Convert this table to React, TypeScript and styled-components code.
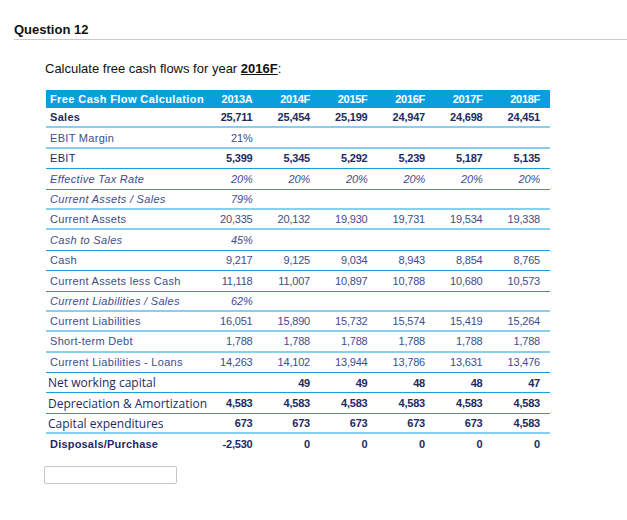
import React from 'react';
import styled, { createGlobalStyle } from 'styled-components';

type Kind = 'bold' | 'semi' | 'plain' | 'italic' | 'calibri' | 'spaced';

interface RowData {
  label: string;
  values: string[];
  kind: Kind;
  line?: 'light' | 'dark' | 'none';
}

const rows: RowData[] = [
  { label: 'Sales', values: ['25,711', '25,454', '25,199', '24,947', '24,698', '24,451'], kind: 'bold', line: 'light' },
  { label: 'EBIT Margin', values: ['21%', '', '', '', '', ''], kind: 'plain', line: 'light' },
  { label: 'EBIT', values: ['5,399', '5,345', '5,292', '5,239', '5,187', '5,135'], kind: 'semi', line: 'dark' },
  { label: 'Effective Tax Rate', values: ['20%', '20%', '20%', '20%', '20%', '20%'], kind: 'italic', line: 'dark' },
  { label: 'Current Assets / Sales', values: ['79%', '', '', '', '', ''], kind: 'italic', line: 'light' },
  { label: 'Current Assets', values: ['20,335', '20,132', '19,930', '19,731', '19,534', '19,338'], kind: 'plain', line: 'light' },
  { label: 'Cash to Sales', values: ['45%', '', '', '', '', ''], kind: 'italic', line: 'dark' },
  { label: 'Cash', values: ['9,217', '9,125', '9,034', '8,943', '8,854', '8,765'], kind: 'plain', line: 'dark' },
  { label: 'Current Assets less Cash', values: ['11,118', '11,007', '10,897', '10,788', '10,680', '10,573'], kind: 'plain', line: 'dark' },
  { label: 'Current Liabilities / Sales', values: ['62%', '', '', '', '', ''], kind: 'italic', line: 'light' },
  { label: 'Current Liabilities', values: ['16,051', '15,890', '15,732', '15,574', '15,419', '15,264'], kind: 'plain', line: 'light' },
  { label: 'Short-term Debt', values: ['1,788', '1,788', '1,788', '1,788', '1,788', '1,788'], kind: 'plain', line: 'light' },
  { label: 'Current Liabilities - Loans', values: ['14,263', '14,102', '13,944', '13,786', '13,631', '13,476'], kind: 'plain', line: 'dark' },
  { label: 'Net working capital', values: ['', '49', '49', '48', '48', '47'], kind: 'calibri', line: 'dark' },
  { label: 'Depreciation & Amortization', values: ['4,583', '4,583', '4,583', '4,583', '4,583', '4,583'], kind: 'calibri', line: 'dark' },
  { label: 'Capital expenditures', values: ['673', '673', '673', '673', '673', '4,583'], kind: 'calibri', line: 'light' },
  { label: 'Disposals/Purchase', values: ['-2,530', '0', '0', '0', '0', '0'], kind: 'spaced', line: 'none' },
];

const years = ['2013A', '2014F', '2015F', '2016F', '2017F', '2018F'];

const isLight = (k: Kind) => k === 'plain' || k === 'italic';

export default function App() {
  return (
    <Page>
      <GlobalStyle />
      <Heading>Question 12</Heading>
      <Prompt>
        Calculate free cash flows for year <Strong>2016F</Strong>:
      </Prompt>
      <Table>
        <HeaderRow>
          <HeaderLabel>Free Cash Flow Calculation</HeaderLabel>
          {years.map((y) => (
            <HeaderCell key={y}>{y}</HeaderCell>
          ))}
        </HeaderRow>
        {rows.map((r) => (
          <Row key={r.label} $line={r.line || 'light'}>
            <Label $kind={r.kind}>{r.label}</Label>
            {r.values.map((v, i) => (
              <Value key={i} $kind={r.kind}>
                {v}
              </Value>
            ))}
          </Row>
        ))}
      </Table>
      <Answer type="text" />
    </Page>
  );
}

const GlobalStyle = createGlobalStyle`
  body {
    margin: 0;
    background: #ffffff;
    font-family: 'Liberation Sans', Arial, sans-serif;
  }
`;

const Page = styled.div`
  width: 627px;
  height: 520px;
  padding-top: 22px;
  box-sizing: border-box;
`;

const Heading = styled.div`
  margin-left: 14px;
  padding-bottom: 2px;
  border-bottom: 1px solid #c9c9c9;
  font-size: 13px;
  font-weight: bold;
  color: #111;
  line-height: 15px;
`;

const Prompt = styled.div`
  margin: 21px 0 0 45px;
  font-size: 13px;
  line-height: 15px;
  color: #111;
`;

const Strong = styled.span`
  font-weight: bold;
  text-decoration: underline;
`;

const Table = styled.div`
  margin: 14px 0 0 46px;
  width: 504px;
`;

const cols = '159px repeat(6, 57.5px)';

const HeaderRow = styled.div`
  display: grid;
  grid-template-columns: ${cols};
  height: 18px;
  align-items: center;
  background: #0a9fdc;
  color: #ffffff;
  font-size: 11px;
  font-weight: bold;
`;

const HeaderLabel = styled.div`
  padding-left: 4px;
  white-space: nowrap;
  letter-spacing: 0.4px;
`;

const HeaderCell = styled.div`
  text-align: right;
  padding-right: 10px;
  letter-spacing: -0.3px;
`;

const lineColors = {
  light: '2px solid #86cfee',
  dark: '1.5px solid #1d9ddb',
  none: '0',
};

const Row = styled.div<{ $line: 'light' | 'dark' | 'none' }>`
  display: grid;
  grid-template-columns: ${cols};
  height: 20.4px;
  box-sizing: border-box;
  align-items: center;
  border-bottom: ${(p) => lineColors[p.$line]};
`;

const Label = styled.div<{ $kind: Kind }>`
  padding-left: ${(p) => (p.$kind === 'calibri' ? '2px' : '4px')};
  white-space: nowrap;
  font-size: ${(p) => (p.$kind === 'calibri' ? '12px' : '11px')};
  font-family: ${(p) =>
    p.$kind === 'calibri' ? "'Open Sans', 'Noto Sans', sans-serif" : "'Liberation Sans', Arial, sans-serif"};
  font-weight: ${(p) => (p.$kind === 'bold' || p.$kind === 'spaced' ? 'bold' : 'normal')};
  font-style: ${(p) => (p.$kind === 'italic' ? 'italic' : 'normal')};
  letter-spacing: ${(p) => (p.$kind === 'spaced' ? '0.2px' : p.$kind === 'calibri' ? '0px' : '0.3px')};
  color: ${(p) => (isLight(p.$kind) ? '#3e4c8c' : '#1e2a62')};
`;

const Value = styled.div<{ $kind: Kind }>`
  text-align: right;
  padding-right: 10px;
  font-size: 11px;
  letter-spacing: -0.2px;
  font-weight: ${(p) => (isLight(p.$kind) ? 'normal' : 'bold')};
  font-style: ${(p) => (p.$kind === 'italic' ? 'italic' : 'normal')};
  color: ${(p) => (isLight(p.$kind) ? '#3e4c8c' : '#1e2a62')};
`;

const Answer = styled.input`
  display: block;
  margin: 11px 0 0 44px;
  width: 133px;
  height: 18px;
  box-sizing: border-box;
  border: 1px solid #c6c6c6;
  border-radius: 2px;
  background: #fff;
  padding: 0;
`;
